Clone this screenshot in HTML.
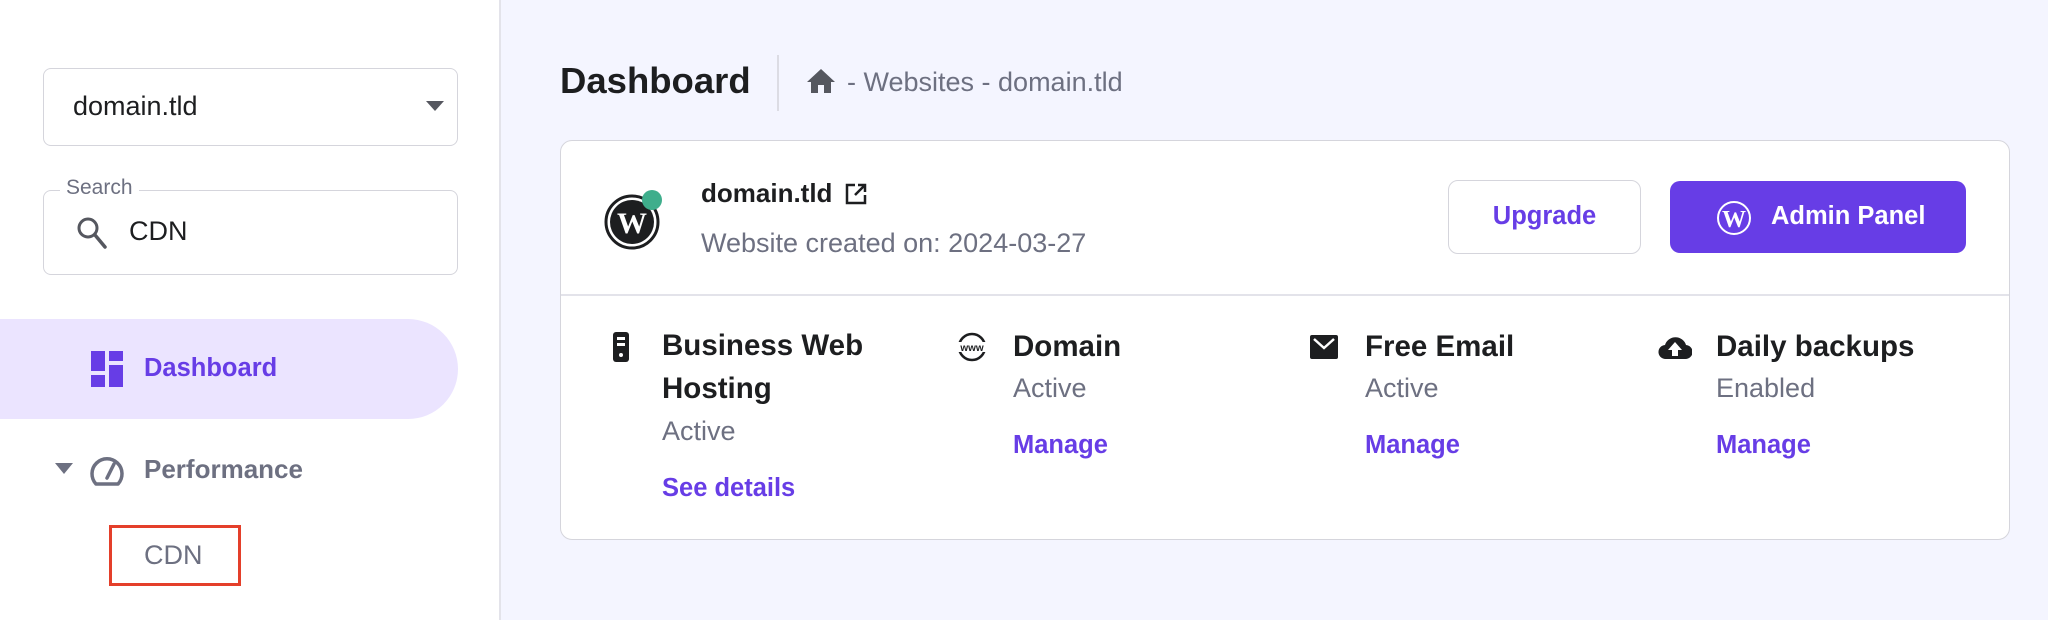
<!DOCTYPE html>
<html><head><meta charset="utf-8"><style>
*{margin:0;padding:0;box-sizing:border-box}
body{width:2048px;height:620px;overflow:hidden;background:#f4f5ff;font-family:"Liberation Sans",sans-serif;color:#1d1e20;position:relative}
.abs{position:absolute}
#side{left:0;top:0;width:501px;height:620px;background:#fff;border-right:2px solid #e3e3ea}
.box{border:1.5px solid #d5d5dc;border-radius:8px;background:#fff}
.t{position:absolute;white-space:nowrap;line-height:1}
.g{color:#6d7081}.p{color:#673de6}.b{font-weight:bold}
</style></head><body>
<div id="side" class="abs">
 <div class="abs box" style="left:43px;top:68px;width:415px;height:78px"></div>
 <div class="t" style="left:73px;top:93px;font-size:27px">domain.tld</div>
 <svg class="abs" style="left:425px;top:100px" width="20" height="12"><path d="M1 1H19L10 11Z" fill="#55575f"/></svg>
 <div class="abs box" style="left:43px;top:190px;width:415px;height:85px"></div>
 <div class="t g" style="left:60px;top:177px;font-size:21px;background:#fff;padding:0 6px">Search</div>
 <svg class="abs" style="left:76px;top:216px" width="32" height="34"><circle cx="12" cy="12" r="9" fill="none" stroke="#55575f" stroke-width="3"/><path d="M19 19L29 31" stroke="#55575f" stroke-width="3.5" stroke-linecap="round"/></svg>
 <div class="t" style="left:129px;top:218px;font-size:27px">CDN</div>
 <div class="abs" style="left:0;top:319px;width:458px;height:100px;background:#ebe4ff;border-radius:0 50px 50px 0"></div>
 <svg class="abs" style="left:91px;top:351px" width="34" height="36"><rect x="0" y="0" width="14" height="20" fill="#673de6"/><rect x="18" y="0" width="14" height="10" fill="#673de6"/><rect x="18" y="14" width="14" height="22" fill="#673de6"/><rect x="0" y="24" width="14" height="12" fill="#673de6"/></svg>
 <div class="t p b" style="left:144px;top:356px;font-size:25.5px">Dashboard</div>
 <svg class="abs" style="left:55px;top:463px" width="18" height="11"><path d="M0 0H18L9 11Z" fill="#6d7081"/></svg>
 <svg class="abs" style="left:88px;top:450px" width="38" height="38"><path d="M8 34A15 15 0 1 1 30 34Z" fill="none" stroke="#6d7081" stroke-width="3.5" stroke-linejoin="round"/><path d="M19 28L26 14" stroke="#6d7081" stroke-width="3.5" stroke-linecap="round"/></svg>
 <div class="t g b" style="left:144px;top:456px;font-size:26px">Performance</div>
 <div class="abs" style="left:109px;top:525px;width:132px;height:61px;border:3px solid #e43f2a"></div>
 <div class="t g" style="left:144px;top:542px;font-size:27px">CDN</div>
</div>

<div class="t b" style="left:560px;top:63px;font-size:36.5px">Dashboard</div>
<div class="abs" style="left:777px;top:55px;width:2px;height:56px;background:#dcdce4"></div>
<svg class="abs" style="left:806px;top:68px" width="30" height="26"><path d="M15 1L1 14H5V25H12V17H18V25H25V14H29Z" fill="#55575f"/></svg>
<div class="t g" style="left:847px;top:69px;font-size:27px">- Websites - domain.tld</div>

<div class="abs box" style="left:560px;top:140px;width:1450px;height:400px;border-radius:12px"></div>
<div class="abs" style="left:561px;top:294px;width:1448px;height:2px;background:#e3e3ea"></div>
<svg class="abs" style="left:602px;top:190px" width="66" height="62"><circle cx="30" cy="32" r="26" fill="#fff" stroke="#1d1e20" stroke-width="3"/><circle cx="30" cy="32" r="22" fill="#1d1e20"/><text x="30" y="43" font-family="Liberation Serif" font-weight="bold" font-size="30" fill="#fff" text-anchor="middle">W</text><circle cx="50" cy="10" r="10" fill="#3fae8c"/></svg>
<div class="t b" style="left:701px;top:180px;font-size:26px">domain.tld</div>
<svg class="abs" style="left:844px;top:182px" width="24" height="24"><path d="M11 3H3V21H21V13M14 3H21V10M21 3L11 13" fill="none" stroke="#1d1e20" stroke-width="2.5"/></svg>
<div class="t g" style="left:701px;top:230px;font-size:27px">Website created on: 2024-03-27</div>
<div class="abs box" style="left:1448px;top:180px;width:193px;height:74px;border-radius:10px"></div>
<div class="t p b" style="left:1448px;top:204px;width:193px;text-align:center;font-size:25.5px">Upgrade</div>
<div class="abs" style="left:1670px;top:181px;width:296px;height:72px;background:#673de6;border-radius:10px"></div>
<svg class="abs" style="left:1716px;top:200px" width="36" height="36"><circle cx="18" cy="18" r="16" fill="none" stroke="#fff" stroke-width="2"/><text x="18" y="27" font-family="Liberation Serif" font-weight="bold" font-size="24" fill="#fff" text-anchor="middle">W</text></svg>
<div class="t b" style="left:1771px;top:204px;font-size:25.5px;color:#fff">Admin Panel</div>

<svg class="abs" style="left:612px;top:331px" width="18" height="32"><rect x="1" y="1" width="16" height="30" rx="3" fill="#1d1e20"/><rect x="5" y="6" width="8" height="3" fill="#fff"/><rect x="5" y="12" width="8" height="3" fill="#fff"/><circle cx="9" cy="24" r="2" fill="#fff"/></svg>
<div class="t b" style="left:662px;top:324px;font-size:29.5px;line-height:43px">Business Web<br>Hosting</div>
<div class="t g" style="left:662px;top:418px;font-size:27px">Active</div>
<div class="t p b" style="left:662px;top:476px;font-size:25.5px">See details</div>

<svg class="abs" style="left:956px;top:332px" width="32" height="30"><circle cx="16" cy="15" r="13" fill="none" stroke="#1d1e20" stroke-width="2.5"/><rect x="0" y="10" width="32" height="10" fill="#fff"/><text x="16" y="19" font-size="10" font-weight="bold" text-anchor="middle" font-family="Liberation Sans" fill="#1d1e20">www</text></svg>
<div class="t b" style="left:1013px;top:332px;font-size:29.5px">Domain</div>
<div class="t g" style="left:1013px;top:375px;font-size:27px">Active</div>
<div class="t p b" style="left:1013px;top:433px;font-size:25.5px">Manage</div>

<svg class="abs" style="left:1310px;top:335px" width="28" height="24"><rect x="0" y="0" width="28" height="24" rx="2" fill="#1d1e20"/><path d="M4 4L14 13L24 4" fill="none" stroke="#fff" stroke-width="2.5"/></svg>
<div class="t b" style="left:1365px;top:332px;font-size:29.5px">Free Email</div>
<div class="t g" style="left:1365px;top:375px;font-size:27px">Active</div>
<div class="t p b" style="left:1365px;top:433px;font-size:25.5px">Manage</div>

<svg class="abs" style="left:1658px;top:333px" width="34" height="28"><path d="M8 26A7 7 0 0 1 7 12A11 11 0 0 1 28 12A7 7 0 0 1 27 26Z" fill="#1d1e20"/><path d="M17 9L10 17H14V23H20V17H24Z" fill="#fff"/></svg>
<div class="t b" style="left:1716px;top:332px;font-size:29.5px">Daily backups</div>
<div class="t g" style="left:1716px;top:375px;font-size:27px">Enabled</div>
<div class="t p b" style="left:1716px;top:433px;font-size:25.5px">Manage</div>
</body></html>
